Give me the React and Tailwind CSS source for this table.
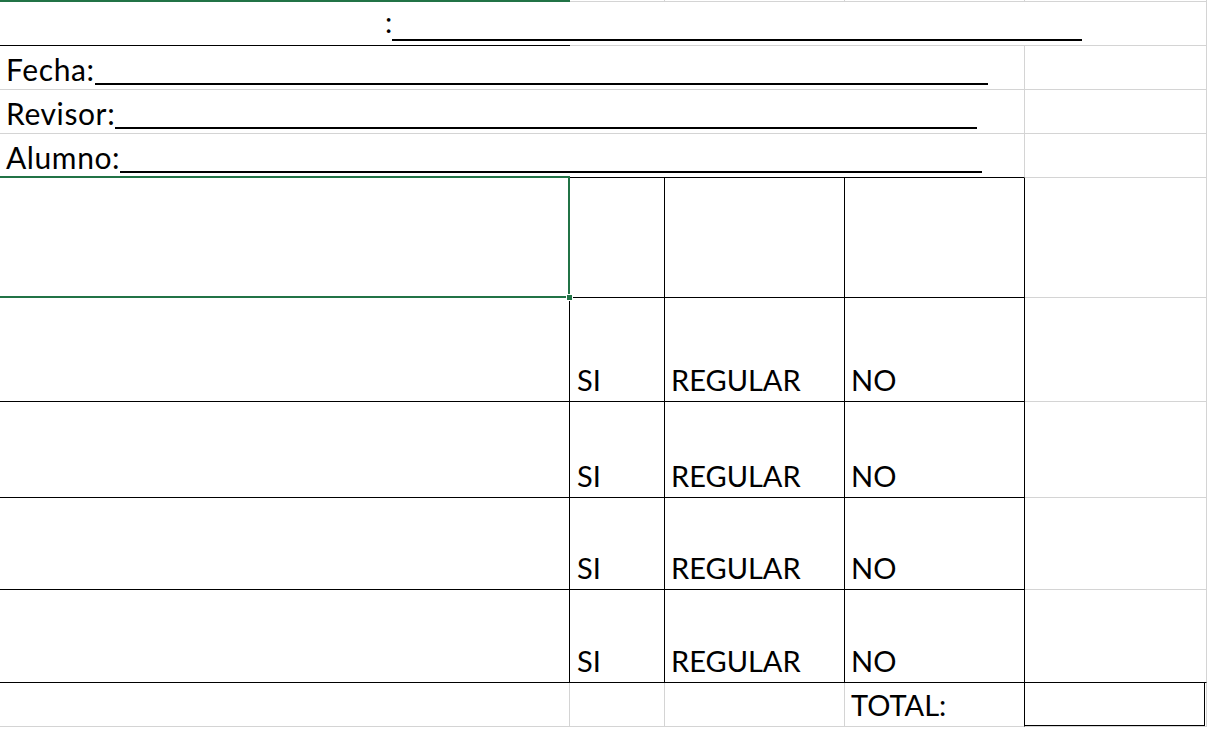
import React from "react";

const TXT = "text-[29px] leading-[29px] text-black whitespace-nowrap";
const LTXT = "text-[30px] leading-[30px] tracking-[0.6px] text-black whitespace-nowrap";

function LabelRow({ label, width, last }) {
  return (
    <>
      <div
        className={
          "col-span-4 border-r border-b border-r-[#d4d4d4] flex items-end " +
          (last ? "border-b-black" : "border-b-[#d4d4d4]")
        }
      >
        <div className="flex items-end pl-[6px]" style={{ width: `${width}px` }}>
          <span className={LTXT + " mb-[5px]"}>{label}</span>
          <div className="flex-1 h-[2px] bg-black mb-[4px]" />
        </div>
      </div>
      <div className="border-r border-b border-[#d4d4d4]" />
    </>
  );
}

function MarkRow({ lastE }) {
  return (
    <>
      <div className="border-r border-b border-black" />
      <div className="border-r border-b border-black flex items-end pl-[7px] pb-[7px]">
        <span className={TXT}>SI</span>
      </div>
      <div className="border-r border-b border-black flex items-end pl-[6px] pb-[7px]">
        <span className={TXT}>REGULAR</span>
      </div>
      <div className="border-r border-b border-black flex items-end pl-[6px] pb-[7px]">
        <span className={TXT}>NO</span>
      </div>
      <div
        className={
          "border-r border-b border-r-[#d4d4d4] " +
          (lastE ? "border-b-black" : "border-b-[#d4d4d4]")
        }
      />
    </>
  );
}

export default function App() {
  return (
    <div className="w-[1207px] h-[729px] bg-white overflow-hidden font-['Lato',sans-serif] text-black">
      <div className="grid grid-cols-[570px_95px_180px_180px_182px] grid-rows-[2px_44px_44px_44px_44px_120px_104px_96px_92px_93px_44px]">
        {/* row 0 */}
        <div className="bg-[#217346]" />
        <div className="border-r border-b border-[#d4d4d4]" />
        <div className="border-r border-b border-[#d4d4d4]" />
        <div className="border-r border-b border-[#d4d4d4]" />
        <div className="border-r border-b border-[#d4d4d4]" />

        {/* row 1 */}
        <div className="border-b border-black flex items-end pl-[385px]">
          <span className={TXT + " mb-[9px]"}>:</span>
          <div className="flex-1 h-[2px] bg-black mb-[4px]" />
        </div>
        <div className="col-span-4 border-r border-b border-[#d4d4d4] flex items-end">
          <div className="w-[512px] h-[2px] bg-black mb-[4px]" />
        </div>

        {/* rows 2-4 */}
        <LabelRow label="Fecha:" width={988} />
        <LabelRow label="Revisor:" width={977} />
        <LabelRow label="Alumno:" width={982} last />

        {/* row 5 */}
        <div className="relative border-r border-b border-black">
          <div className="absolute top-[-2px] left-[-2px] right-[-1px] bottom-[-1px] border-2 border-[#217346]" />
          <div className="absolute right-[-4px] bottom-[-4px] w-[7px] h-[7px] bg-[#217346] border border-white" />
        </div>
        <div className="border-r border-b border-black" />
        <div className="border-r border-b border-black" />
        <div className="border-r border-b border-black" />
        <div className="border-r border-b border-[#d4d4d4]" />

        {/* rows 6-9 */}
        <MarkRow />
        <MarkRow />
        <MarkRow />
        <MarkRow lastE />

        {/* row 10 */}
        <div className="border-r border-b border-[#d4d4d4]" />
        <div className="border-r border-b border-[#d4d4d4]" />
        <div className="border-r border-b border-[#d4d4d4]" />
        <div className="border-r border-b border-r-black border-b-[#d4d4d4] flex items-end pl-[6px] pb-[7px]">
          <span className={TXT}>TOTAL:</span>
        </div>
        <div className="border-r border-b border-[#d4d4d4]">
          <div className="w-[180px] h-full border-r border-b border-black" />
        </div>
      </div>
    </div>
  );
}
